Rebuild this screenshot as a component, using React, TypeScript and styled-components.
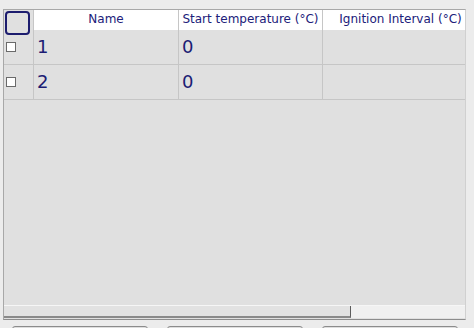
import React from 'react';
import styled, { createGlobalStyle } from 'styled-components';

const GlobalStyle = createGlobalStyle`
  html, body {
    margin: 0;
    padding: 0;
    background: #ececec;
    overflow: hidden;
  }
  body {
    font-family: 'DejaVu Sans', Verdana, sans-serif;
  }
`;

const Page = styled.div`
  width: 474px;
  height: 328px;
  padding: 9px 8px 0 3px;
  box-sizing: border-box;
  display: flex;
  flex-direction: column;
  overflow: hidden;
`;

const Panel = styled.div`
  flex: 0 0 311px;
  height: 311px;
  box-sizing: border-box;
  border: 1px solid #a8a8a8;
  border-right-color: #d0d0d0;
  border-bottom-color: #8c8c8c;
  background: #e0e0e0;
  display: flex;
  flex-direction: column;
  overflow: hidden;
`;

const Grid = styled.div`
  flex: 1;
  display: grid;
  grid-template-columns: 30px 145px 144px 156px;
  grid-template-rows: 20px 35px 35px;
  align-content: start;
  overflow: hidden;
`;

const HeadCell = styled.div<{ $corner?: boolean }>`
  position: relative;
  background: ${(p) => (p.$corner ? '#e0e0e0' : '#ffffff')};
  border-right: 1px solid #c6c6c6;
  color: #20207a;
  font-size: 12px;
  line-height: 19px;
  text-align: center;
  white-space: nowrap;
  overflow: visible;
`;

const CornerBox = styled.div`
  position: absolute;
  left: 1px;
  top: 1px;
  width: 21px;
  height: 20px;
  border: 2px solid #1c1c6e;
  border-radius: 4px;
  background: transparent;
  z-index: 2;
`;

const Cell = styled.div`
  border-right: 1px solid #c6c6c6;
  border-bottom: 1px solid #c6c6c6;
  color: #1c1c74;
  font-size: 18px;
  line-height: 34px;
  padding-left: 3px;
  display: flex;
  align-items: center;
`;

const CheckCell = styled(Cell)`
  padding-left: 2px;
`;

const SmallCheck = styled.span`
  display: block;
  width: 8px;
  height: 8px;
  border: 1px solid #6a6a6a;
  background: #ffffff;
`;

const Scrollbar = styled.div`
  flex: 0 0 12px;
  height: 12px;
  display: flex;
  border-top: 1px solid #f6f6f6;
  border-bottom: 1px solid #e0e0e0;
  background: #f0f0f0;
`;

const Thumb = styled.div`
  width: 347px;
  background: #e2e2e2;
  border-right: 1px solid #5c5c5c;
  border-bottom: 2px solid #8a8a8a;
  box-sizing: border-box;
`;

const ButtonRow = styled.div`
  flex: 0 0 auto;
  display: flex;
  gap: 19px;
  padding: 6px 0 0 9px;
`;

const Button = styled.div`
  width: 136px;
  height: 20px;
  box-sizing: border-box;
  border: 1px solid #8c8c8c;
  border-radius: 3px;
  background: #dedede;
`;

const rows = [
  { name: '1', start: '0', interval: '' },
  { name: '2', start: '0', interval: '' },
];

export default function App() {
  return (
    <>
      <GlobalStyle />
      <Page>
        <Panel>
          <Grid>
            <HeadCell $corner>
              <CornerBox />
            </HeadCell>
            <HeadCell>Name</HeadCell>
            <HeadCell>Start temperature (°C)</HeadCell>
            <HeadCell>Ignition Interval (°C)</HeadCell>
            {rows.map((r) => (
              <React.Fragment key={r.name}>
                <CheckCell>
                  <SmallCheck />
                </CheckCell>
                <Cell>{r.name}</Cell>
                <Cell>{r.start}</Cell>
                <Cell>{r.interval}</Cell>
              </React.Fragment>
            ))}
          </Grid>
          <Scrollbar>
            <Thumb />
          </Scrollbar>
        </Panel>
        <ButtonRow>
          <Button />
          <Button />
          <Button />
        </ButtonRow>
      </Page>
    </>
  );
}
